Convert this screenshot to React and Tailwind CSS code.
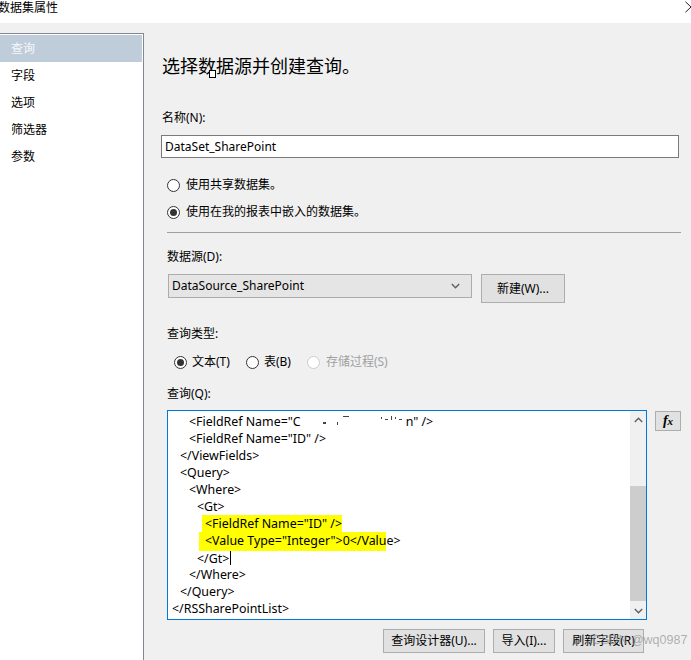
import React from 'react'

const navItems = ['查询', '字段', '选项', '筛选器', '参数']

function Radio({ checked, disabled }) {
  return (
    <span
      className={`flex h-[13px] w-[13px] shrink-0 items-center justify-center rounded-full border bg-white ${
        disabled ? 'border-[#cccccc]' : 'border-[#333333]'
      }`}
    >
      {checked ? <span className="h-[7px] w-[7px] rounded-full bg-[#333333]" /> : null}
    </span>
  )
}

function Chevron({ up }) {
  return (
    <svg width="9" height="6" viewBox="0 0 9 6" className="block">
      <path
        d={up ? 'M0.8 5 L4.5 1.3 L8.2 5' : 'M0.8 1 L4.5 4.7 L8.2 1'}
        fill="none"
        stroke="#606060"
        strokeWidth="1.4"
      />
    </svg>
  )
}

function Button({ children, className }) {
  return (
    <div
      className={`flex h-[24px] items-center justify-center border border-[#adadad] bg-[#e1e1e1] leading-[16px] ${className}`}
    >
      {children}
    </div>
  )
}

const codeLines = [
  { pad: 'pl-[21px]', text: null },
  { pad: 'pl-[21px]', text: '<FieldRef Name="ID" />' },
  { pad: 'pl-[12px]', text: '</ViewFields>' },
  { pad: 'pl-[12px]', text: '<Query>' },
  { pad: 'pl-[21px]', text: '<Where>' },
  { pad: 'pl-[29px]', text: '<Gt>' },
  { pad: 'pl-[37px]', text: 'hl1' },
  { pad: 'pl-[37px]', text: 'hl2' },
  { pad: 'pl-[29px]', text: 'gt' },
  { pad: 'pl-[21px]', text: '</Where>' },
  { pad: 'pl-[12px]', text: '</Query>' },
  { pad: 'pl-[4px]', text: '</RSSharePointList>' },
]

function CodeLine({ line }) {
  let content = line.text
  if (line.text === null) {
    content = (
      <>
        {'<FieldRef Name="C'}
        <span className="relative inline-block h-[10px] w-[105px]">
          <span className="absolute left-[22px] top-[6px] h-[2px] w-[3px] bg-[#444]" />
          <span className="absolute left-[36px] top-[6px] h-[3px] w-[1px] bg-[#444]" />
          <span className="absolute left-[42px] top-[0px] h-[1px] w-[6px] bg-[#444]" />
          <span className="absolute left-[80px] top-[1px] h-[2px] w-[1px] bg-[#444]" />
          <span className="absolute left-[84px] top-[3px] h-[1px] w-[3px] bg-[#444]" />
          <span className="absolute left-[90px] top-[0px] h-[4px] w-[1px] bg-[#444]" />
          <span className="absolute left-[94px] top-[1px] h-[2px] w-[1px] bg-[#444]" />
          <span className="absolute left-[98px] top-[3px] h-[1px] w-[3px] bg-[#444]" />
        </span>
        {'n" />'}
      </>
    )
  } else if (line.text === 'hl1') {
    content = <span className="-ml-[3px] bg-[#ffff00] pl-[3px]">{'<FieldRef Name="ID" />'}</span>
  } else if (line.text === 'hl2') {
    content = (
      <>
        <span className="-ml-[6px] bg-[#ffff00] pb-[2px] pl-[6px]">{'<Value Type="Integer">0</Valu'}</span>
        {'e>'}
      </>
    )
  } else if (line.text === 'gt') {
    content = (
      <>
        {'</Gt>'}
        <span className="ml-[1px] inline-block h-[14px] w-[1px] translate-y-[2px] bg-black" />
      </>
    )
  }
  return <div className={`h-[17px] whitespace-pre leading-[17px] ${line.pad}`}>{content}</div>
}

export default function App() {
  return (
    <div className="relative h-[660px] w-[691px] overflow-hidden bg-[#f0f0f0] font-['Noto_Sans','Noto_Sans_CJK_SC',sans-serif] text-[12px] text-black">
      {/* window title */}
      <div className="relative h-[23px] bg-white">
        <div className="-ml-[2px] leading-[16px]">数据集属性</div>
        <svg width="6" height="12" viewBox="0 0 6 12" className="absolute right-0 top-[1px]">
          <path d="M0.5 0.8 L6 6 M0.5 11.2 L6 6" fill="none" stroke="#222" strokeWidth="1" />
        </svg>
      </div>

      <div className="flex h-[637px]">
        {/* left nav */}
        <div className="mt-[10px] w-[144px] border-r border-t border-[#828790] bg-white pr-[1px] pt-[1px]">
          {navItems.map((item, i) => (
            <div
              key={item}
              className={`h-[27px] pl-[11px] leading-[27px] ${i === 0 ? 'bg-[#bfcddb] text-[#f7f7f7]' : ''}`}
            >
              {item}
            </div>
          ))}
        </div>

        {/* main */}
        <div className="flex flex-1 flex-col">
          <div className="relative ml-[18px] mt-[31px] text-[18px] leading-[24px]">
            选择数据源并创建查询。
            <span className="absolute left-[47px] top-[16px] h-[8px] w-[7px] border border-black bg-white" />
          </div>

          <div className="ml-[18px] mt-[32px] h-[16px] leading-[16px]">名称(N):</div>
          <div className="ml-[17px] mt-[9px] flex h-[23px] w-[518px] items-center border border-[#7a7a7a] bg-white pl-[3px]">
            DataSet_SharePoint
          </div>

          <div className="ml-[23px] mt-[19px] flex h-[16px] items-center gap-[6px] leading-[16px]">
            <Radio />
            <span>使用共享数据集。</span>
          </div>
          <div className="ml-[23px] mt-[11px] flex h-[16px] items-center gap-[6px] leading-[16px]">
            <Radio checked />
            <span>使用在我的报表中嵌入的数据集。</span>
          </div>

          <div className="ml-[23px] mt-[12px] h-[1px] w-[514px] bg-[#a0a0a0]" />

          <div className="ml-[23px] mt-[16px] h-[16px] leading-[16px]">数据源(D):</div>
          <div className="ml-[24px] mt-[9px] flex items-start gap-[9px]">
            <div className="flex h-[24px] w-[304px] items-center justify-between border border-[#acacac] bg-[#e5e5e5] pl-[3px] pr-[11px]">
              <span>DataSource_SharePoint</span>
              <Chevron />
            </div>
            <Button className="h-[29px] w-[84px]">新建(W)...</Button>
          </div>

          <div className="ml-[23px] mt-[23px] h-[16px] leading-[16px]">查询类型:</div>
          <div className="ml-[30px] mt-[12px] flex h-[16px] items-center leading-[16px]">
            <Radio checked />
            <span className="ml-[5px]">文本(T)</span>
            <span className="ml-[16px]">
              <Radio />
            </span>
            <span className="ml-[5px]">表(B)</span>
            <span className="ml-[16px]">
              <Radio disabled />
            </span>
            <span className="ml-[6px] text-[#a0a0a0]">存储过程(S)</span>
          </div>

          <div className="ml-[23px] mt-[16px] h-[16px] leading-[16px]">查询(Q):</div>
          <div className="ml-[23px] mt-[8px] flex items-start">
            <div className="flex h-[210px] w-[480px] border border-[#0078d7] bg-white">
              <div className="flex-1 overflow-hidden pt-[2px] text-[12.4px]">
                {codeLines.map((line, i) => (
                  <CodeLine key={i} line={line} />
                ))}
              </div>
              <div className="flex w-[16px] flex-col bg-[#f0f0f0]">
                <div className="flex h-[17px] items-center justify-center">
                  <Chevron up />
                </div>
                <div className="h-[58px]" />
                <div className="h-[115px] bg-[#cdcdcd]" />
                <div className="flex-1" />
                <div className="flex h-[17px] items-center justify-center">
                  <Chevron />
                </div>
              </div>
            </div>
            <div className="ml-[8px] mt-[1px] flex h-[20px] w-[26px] items-center justify-center border border-[#adadad] bg-[#e1e1e1] font-['Liberation_Serif',serif] text-[14px] font-bold italic leading-[14px]">
              f<span className="text-[11px]">x</span>
            </div>
          </div>

          <div className="ml-[239px] mt-[9px] flex gap-[8px]">
            <Button className="w-[102px]">查询设计器(U)...</Button>
            <Button className="w-[62px]">导入(I)...</Button>
            <Button className="w-[81px]">刷新字段(R)</Button>
          </div>
        </div>
      </div>

      {/* watermark */}
      <div className="absolute left-[592px] top-[632px] whitespace-nowrap font-['Liberation_Sans',sans-serif] text-[12.5px] leading-[16px] text-[#909090]/70">
        CSDN @wq0987
      </div>
    </div>
  )
}
